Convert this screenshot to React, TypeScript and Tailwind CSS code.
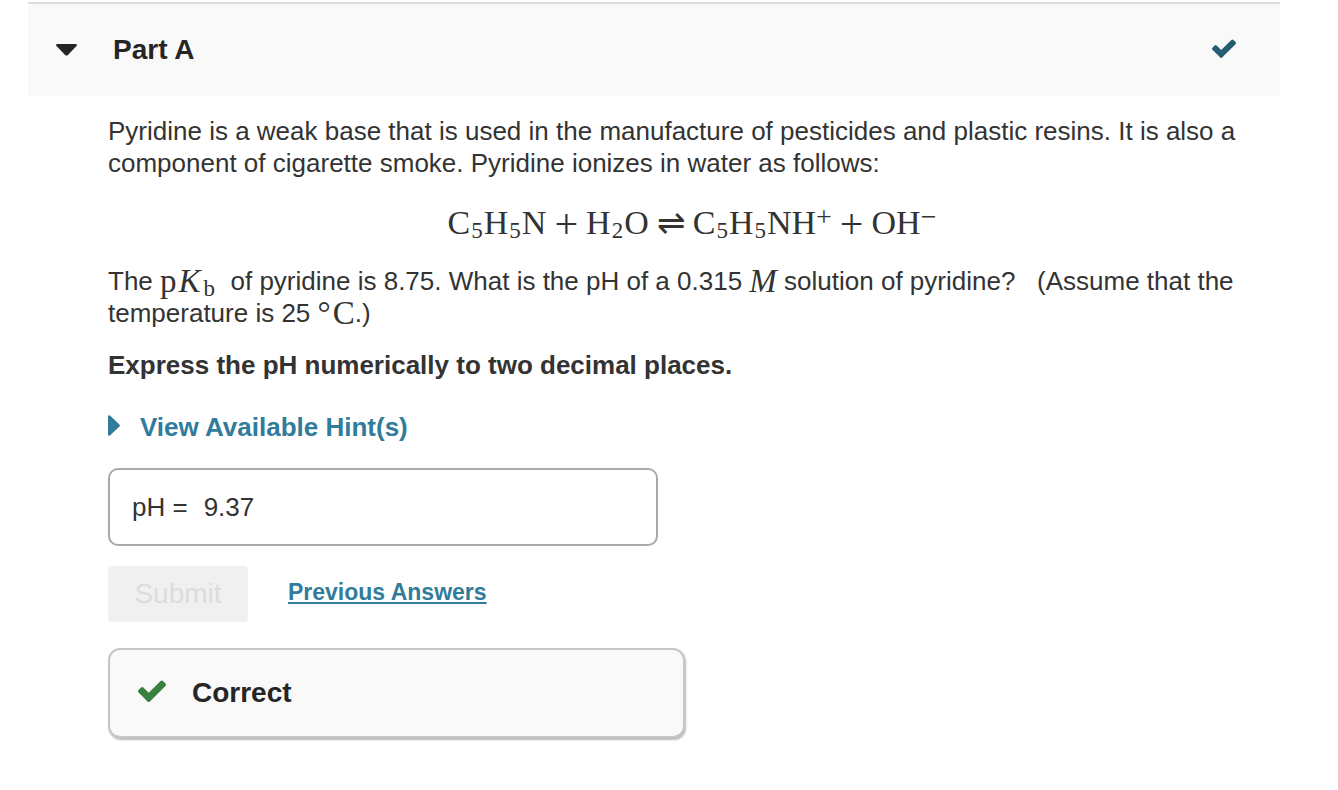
import type { ReactNode } from "react";

const mathFont = "font-['Liberation_Serif','Times_New_Roman',serif]";

function Sub({ children }: { children: ReactNode }) {
  return <sub className="relative top-1 px-px align-baseline text-[23px] leading-none">{children}</sub>;
}

function Sup({ children }: { children: ReactNode }) {
  return <sup className="relative -top-2 align-baseline text-[28px] leading-none">{children}</sup>;
}

function Plus() {
  return <span className="relative top-1 text-[42px] leading-8">+</span>;
}

function InlineMath({ children }: { children: ReactNode }) {
  return <span className={`relative top-0.5 text-[33px] leading-6 ${mathFont}`}>{children}</span>;
}

function Check({ className }: { className: string }) {
  return (
    <svg viewBox="121 309 1550 1213" className={className} fill="currentColor" aria-hidden="true">
      <path d="M1671 566q0 40-28 68l-724 724-136 136q-28 28-68 28t-68-28l-136-136-362-362q-28-28-28-68t28-68l136-136q28-28 68-28t68 28l294 295 656-657q28-28 68-28t68 28l136 136q28 28 28 68z" />
    </svg>
  );
}

function Header() {
  return (
    <header className="ml-7 mr-[58px] mt-0.5 flex h-[94px] items-center justify-between border-t-2 border-[#dcdcdc] bg-[#f9f9f9] pl-7 pr-11">
      <button type="button" aria-expanded="true" className="flex items-center gap-9 text-[#252525]">
        <svg viewBox="0 0 21 12" className="h-3 w-[21px]" fill="currentColor" aria-hidden="true">
          <path d="M1 0h19q1.6.5.5 2l-8.600 9q-1.400 1.200-2.800 0L.5 2Q-.6.5 1 0z" />
        </svg>
        <h2 className="text-[28px] font-bold leading-8">Part A</h2>
      </button>
      <Check className="mb-1 h-[19px] w-6 text-[#255c74]" />
    </header>
  );
}

function Equation() {
  return (
    <p className={`mt-6 flex items-baseline justify-center gap-2 whitespace-nowrap text-[34px] leading-10 ${mathFont}`}>
      <span>C<Sub>5</Sub>H<Sub>5</Sub>N</span>
      <Plus />
      <span>H<Sub>2</Sub>O</span>
      <span>⇌</span>
      <span>C<Sub>5</Sub>H<Sub>5</Sub>NH<Sup>+</Sup></span>
      <Plus />
      <span>OH<Sup>−</Sup></span>
    </p>
  );
}

export default function App() {
  return (
    <main className="flow-root min-h-screen bg-white font-['Liberation_Sans',Arial,sans-serif] text-[26px] leading-8 text-[#333]">
      <Header />
      <section className="ml-[108px] mr-[62px] mt-[19px]">
        <p>
          Pyridine is a weak base that is used in the manufacture of pesticides and plastic resins. It is also a
          component of cigarette smoke. Pyridine ionizes in water as follows:
        </p>
        <Equation />
        <p className="mt-[22px]">
          The <InlineMath>p<i className="mx-0.5">K</i><Sub>b</Sub></InlineMath>
          {"\u00a0 "}of pyridine is 8.75. What is the pH of a 0.315{" "}
          <InlineMath><i>M</i></InlineMath> solution of pyridine?{"\u00a0\u00a0 "}(Assume that the
          temperature is 25 <InlineMath>°<span className="ml-0.5">C</span></InlineMath>.)
        </p>
        <p className="mt-5 font-bold">Express the pH numerically to two decimal places.</p>
        <button type="button" className="mt-[30px] flex items-center gap-5 font-bold text-[#317b9b]">
          <svg viewBox="0 0 12 21" className="mb-1 h-[21px] w-3" fill="currentColor" aria-hidden="true">
            <path d="M0 1.500Q.3-.5 2 .6l9.200 8.600q1.400 1.300 0 2.600L2 20.400Q.3 21.500 0 19.500z" />
          </svg>
          View Available Hint(s)
        </button>
        <label className="mt-[25px] flex h-[78px] max-w-[550px] items-center gap-4 rounded-[10px] border-2 border-[#a9a9a9] px-[22px]">
          <span>pH =</span>
          <input type="text" defaultValue="9.37" className="min-w-0 flex-1 bg-transparent outline-none" />
        </label>
        <div className="mt-5 flex items-center gap-10">
          <button type="button" disabled className="h-14 w-[140px] rounded bg-[#f0f0f0] text-[28px] text-[#dcdcdc]">
            Submit
          </button>
          <a href="#previous" className="pb-1 text-[23px] font-bold text-[#317b9b] underline decoration-2 underline-offset-2">
            Previous Answers
          </a>
        </div>
        <div role="status" className="mt-[26px] flex h-[90px] max-w-[577px] items-center gap-[26px] rounded-xl border-2 border-[#c6c6c6] bg-[#f9f9f9] pl-7 shadow-[1px_2px_2px_#bbb]">
          <Check className="mb-1 h-[22px] w-7 text-[#3a8040]" />
          <span className="text-[28px] font-bold text-[#252525]">Correct</span>
        </div>
      </section>
    </main>
  );
}
